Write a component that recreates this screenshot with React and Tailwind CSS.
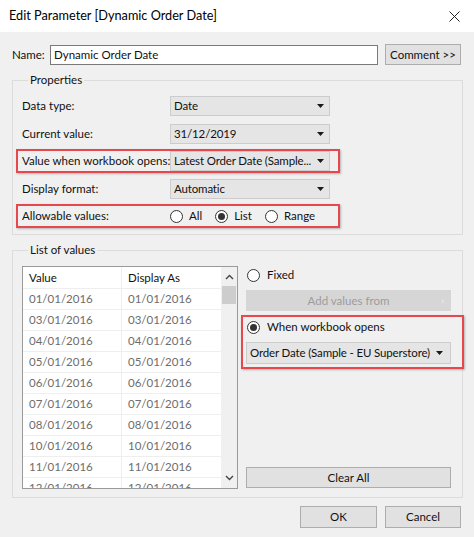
import React from 'react';

const Caret = () => (
  <svg width="7" height="4" viewBox="0 0 7 4" className="ml-[6px] shrink-0">
    <polygon points="0,0 7,0 3.5,4" fill="#1a1a1a" />
  </svg>
);

const Select = ({ value, className = '' }) => (
  <div
    className={`flex h-[20px] items-center justify-between border border-[#cccccc] bg-[#e5e5e5] pl-[3px] pr-[5px] ${className}`}
  >
    <span className="min-w-0 overflow-hidden whitespace-nowrap tracking-[-0.15px]">{value}</span>
    <Caret />
  </div>
);

const Radio = ({ checked }) => (
  <span className="flex h-[13px] w-[13px] shrink-0 items-center justify-center rounded-full border border-[#333333] bg-white">
    {checked && <span className="h-[7px] w-[7px] rounded-full bg-[#333333]" />}
  </span>
);

const Button = ({ children, className = '' }) => (
  <div
    className={`flex items-center justify-center border border-[#adadad] bg-[#e1e1e1] ${className}`}
  >
    {children}
  </div>
);

const Row = ({ label, children, className = '' }) => (
  <div className={`flex h-[20px] items-center ${className}`}>
    <span className="w-[148px] shrink-0">{label}</span>
    {children}
  </div>
);

const dates = [
  '01/01/2016',
  '03/01/2016',
  '04/01/2016',
  '05/01/2016',
  '06/01/2016',
  '07/01/2016',
  '08/01/2016',
  '10/01/2016',
  '11/01/2016',
  '12/01/2016',
];

const App = () => {
  return (
    <div className="flex h-[537px] w-[474px] flex-col bg-[#f0f0f0] font-['Lato',sans-serif] text-[11.5px] text-[#111]">
      {/* title bar */}
      <div className="flex h-[32px] shrink-0 items-center justify-between bg-white pl-[9px] pr-[14px]">
        <span className="text-[12.7px] text-black">Edit Parameter [Dynamic Order Date]</span>
        <svg width="11" height="11" viewBox="0 0 11 11">
          <path d="M0.5 0.5 L10.5 10.5 M10.5 0.5 L0.5 10.5" stroke="#222" strokeWidth="1" />
        </svg>
      </div>

      <div className="flex flex-col px-[12px] pt-[12px]">
        {/* name */}
        <div className="flex h-[21px] items-center">
          <span className="w-[38px] shrink-0">Name:</span>
          <div className="flex h-[20px] w-[328px] items-center border border-[#7a7a7a] bg-white pl-[3px]">
            Dynamic Order Date
          </div>
          <Button className="ml-[7px] h-[21px] w-[76px]">Comment &gt;&gt;</Button>
        </div>

        {/* properties */}
        <fieldset className="mt-[7px] w-[451px] border border-[#dcdcdc] pb-[6px] pl-[9px]">
          <legend className="ml-[6px] px-[2px] leading-[16px]">Properties</legend>
          <Row label="Data type:" className="mt-[8px]">
            <Select value="Date" className="w-[160px]" />
          </Row>
          <Row label="Current value:" className="mt-[8px]">
            <Select value="31/12/2019" className="w-[160px]" />
          </Row>
          <div className="-ml-[6px] mt-[5px] flex h-[24px] w-[324px] items-center border-2 border-[#e5484d] pl-[4px] shadow-[1px_1px_2px_rgba(0,0,0,0.25)]">
            <span className="w-[148px] shrink-0 whitespace-nowrap">Value when workbook opens:</span>
            <Select value="Latest Order Date (Sample..." className="w-[160px]" />
          </div>
          <Row label="Display format:" className="mt-[6px]">
            <Select value="Automatic" className="w-[160px]" />
          </Row>
          <div className="-ml-[6px] mt-[5px] flex h-[24px] w-[324px] items-center border-2 border-[#e5484d] pl-[4px] shadow-[1px_1px_2px_rgba(0,0,0,0.25)]">
            <span className="w-[148px] shrink-0">Allowable values:</span>
            <div className="flex items-center">
              <Radio />
              <span className="ml-[6px]">All</span>
              <span className="ml-[13px]">
                <Radio checked />
              </span>
              <span className="ml-[6px]">List</span>
              <span className="ml-[13px]">
                <Radio />
              </span>
              <span className="ml-[6px]">Range</span>
            </div>
          </div>
        </fieldset>

        {/* list of values */}
        <fieldset className="mt-[7px] w-[451px] border border-[#dcdcdc] pb-[8px] pl-[9px]">
          <legend className="ml-[6px] px-[2px] leading-[16px]">List of values</legend>
          <div className="mt-[8px] flex">
            {/* table */}
            <div className="flex h-[223px] w-[216px] overflow-hidden border border-[#9a9a9a] bg-white">
              <div className="flex w-[198px] flex-col">
                <div className="flex h-[22px] shrink-0 items-center border-b border-[#eeeeee]">
                  <span className="w-[99px] border-r border-[#eeeeee] pl-[6px] leading-[22px]">Value</span>
                  <span className="pl-[6px]">Display As</span>
                </div>
                {dates.map((d) => (
                  <div key={d} className="flex h-[21px] shrink-0 items-center border-b border-[#eeeeee] text-[#6d6d6d]">
                    <span className="w-[99px] border-r border-[#eeeeee] pl-[6px] leading-[20px]">{d}</span>
                    <span className="pl-[6px]">{d}</span>
                  </div>
                ))}
              </div>
              {/* scrollbar */}
              <div className="flex w-[16px] flex-col bg-[#f0f0f0]">
                <div className="flex h-[19px] items-center justify-center">
                  <svg width="9" height="6" viewBox="0 0 9 6">
                    <polyline points="1,5 4.5,1.5 8,5" fill="none" stroke="#444" strokeWidth="1.4" />
                  </svg>
                </div>
                <div className="mx-[1px] h-[18px] bg-[#cdcdcd]" />
                <div className="flex-1" />
                <div className="flex h-[20px] items-center justify-center">
                  <svg width="9" height="6" viewBox="0 0 9 6">
                    <polyline points="1,1 4.5,4.5 8,1" fill="none" stroke="#444" strokeWidth="1.4" />
                  </svg>
                </div>
              </div>
            </div>

            {/* right column */}
            <div className="ml-[8px] flex h-[223px] w-[205px] flex-col">
              <div className="flex h-[18px] items-center pl-[1px]">
                <Radio />
                <span className="ml-[7px]">Fixed</span>
              </div>
              <div className="relative mt-[6px] flex h-[21px] items-center justify-center bg-[#d6d6d6] text-[#9c9c9c]">
                Add values from
                <span className="absolute right-[7px] text-[10px] text-[#f4f4f4]">&#x203A;</span>
              </div>
              <div className="-ml-[5px] -mr-[13px] mt-[4px] flex flex-col border-2 border-[#e5484d] pb-[3px] pl-[3px] pr-[11px] shadow-[1px_1px_2px_rgba(0,0,0,0.25)]">
                <div className="mt-[1px] flex h-[18px] items-center pl-[1px]">
                  <Radio checked />
                  <span className="ml-[7px]">When workbook opens</span>
                </div>
                <Select value="Order Date (Sample - EU Superstore)" className="mt-[6px] h-[22px] border-[#adadad] pr-[7px]" />
              </div>
              <div className="flex-1" />
              <Button className="mb-[1px] h-[21px]">Clear All</Button>
            </div>
          </div>
        </fieldset>

        {/* footer */}
        <div className="mt-[8px] flex justify-end pr-[1px]">
          <Button className="h-[22px] w-[77px] border-[#0078d7]">OK</Button>
          <Button className="ml-[8px] h-[22px] w-[76px]">Cancel</Button>
        </div>
      </div>
    </div>
  );
};

export default App;
